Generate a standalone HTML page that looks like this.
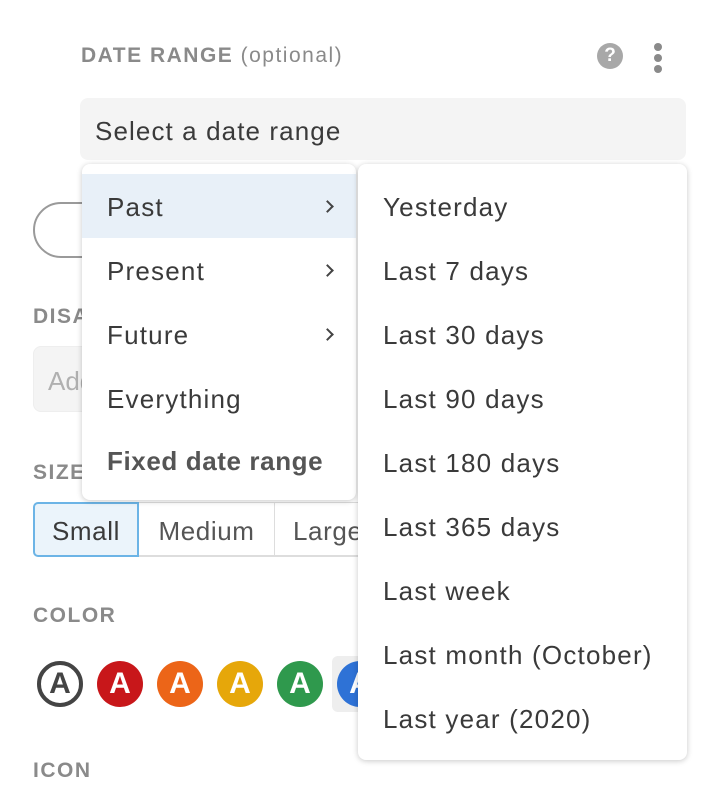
<!DOCTYPE html>
<html><head><meta charset="utf-8"><style>
*{box-sizing:border-box;margin:0;padding:0}
body{width:706px;height:786px;background:#fff;font-family:"Liberation Sans",sans-serif;position:relative;overflow:hidden;color:#3a3a3a}
.a{position:absolute}
.lbl{font-size:21px;font-weight:bold;color:#8a8a8a;letter-spacing:1.5px}
.item{position:absolute;left:0;right:0;height:64px;line-height:66px;font-size:26px;letter-spacing:1.2px;color:#3a3a3a}
.chev{position:absolute;right:24px;top:28px;width:9px;height:9px;border-right:2.5px solid #444;border-top:2.5px solid #444;transform:rotate(45deg)}
.circ{position:absolute;width:46px;height:46px;border-radius:50%;color:#fff;font-weight:bold;font-size:30px;text-align:center;line-height:46px;top:661px}
</style></head><body>
<div class="a lbl" style="left:81px;top:44px">DATE RANGE <span style="font-weight:normal">(optional)</span></div>
<div class="a" style="left:597px;top:43px;width:26px;height:26px;border-radius:50%;background:#a8a8a8;color:#fff;font-weight:bold;font-size:19px;text-align:center;line-height:26px">?</div>
<div class="a" style="left:654px;top:43px;width:8px;height:8px;border-radius:50%;background:#8a8a8a"></div>
<div class="a" style="left:654px;top:54px;width:8px;height:8px;border-radius:50%;background:#8a8a8a"></div>
<div class="a" style="left:654px;top:65px;width:8px;height:8px;border-radius:50%;background:#8a8a8a"></div>
<div class="a" style="left:80px;top:98px;width:606px;height:62px;background:#f4f4f4;border-radius:8px;font-size:26px;letter-spacing:1.1px;line-height:66px;padding-left:15px;color:#3a3a3a">Select a date range</div>

<div class="a" style="left:33px;top:202px;width:120px;height:56px;border:2px solid #9a9a9a;border-radius:28px"></div>
<div class="a lbl" style="left:33px;top:305px">DISABLED</div>
<div class="a" style="left:33px;top:346px;width:300px;height:66px;background:#f4f4f4;border:1px solid #eee;border-radius:8px;font-size:26px;line-height:68px;padding-left:14px;color:#b0b0b0">Add</div>
<div class="a lbl" style="left:33px;top:461px">SIZE</div>
<div class="a" style="left:33px;top:502px;width:106px;height:55px;background:#ebf4fb;border:2px solid #6cb4e6;border-radius:5px 0 0 5px;font-size:26px;letter-spacing:0.6px;line-height:54px;text-align:center">Small</div>
<div class="a" style="left:139px;top:502px;width:136px;height:55px;border:1px solid #ddd;border-width:1px 1px 2px 0;font-size:26px;letter-spacing:0.6px;line-height:56px;text-align:center;color:#555">Medium</div>
<div class="a" style="left:275px;top:502px;width:120px;height:55px;border:1px solid #ddd;border-width:1px 1px 2px 0;font-size:26px;letter-spacing:0.6px;line-height:56px;padding-left:18px;color:#555">Large</div>
<div class="a lbl" style="left:33px;top:604px">COLOR</div>
<div class="circ" style="left:37px;border:4px solid #444;color:#444;line-height:38px;background:#fff">A</div>
<div class="circ" style="left:97px;background:#c8171a">A</div>
<div class="circ" style="left:157px;background:#ec6518">A</div>
<div class="circ" style="left:217px;background:#e6a70a">A</div>
<div class="circ" style="left:277px;background:#2f994d">A</div>
<div class="a" style="left:332px;top:656px;width:40px;height:56px;background:#eee;border-radius:6px"></div>
<div class="circ" style="left:337px;background:#2e72d6">A</div>
<div class="a lbl" style="left:33px;top:759px">ICON</div>

<div class="a" style="left:82px;top:164px;width:274px;height:336px;background:#fff;border-radius:8px;box-shadow:0 1px 6px rgba(0,0,0,.22);overflow:hidden">
<div class="item" style="top:10px;background:#e8f0f8;padding-left:25px">Past<span class="chev"></span></div>
<div class="item" style="top:74px;padding-left:25px">Present<span class="chev"></span></div>
<div class="item" style="top:138px;padding-left:25px">Future<span class="chev"></span></div>
<div class="item" style="top:202px;padding-left:25px">Everything</div>
<div class="item" style="top:264px;padding-left:25px;font-weight:bold;letter-spacing:0.6px;color:#555">Fixed date range</div>
</div>
<div class="a" style="left:358px;top:164px;width:329px;height:596px;background:#fff;border-radius:8px;box-shadow:0 1px 6px rgba(0,0,0,.22)">
<div class="item" style="top:10px;padding-left:25px">Yesterday</div>
<div class="item" style="top:74px;padding-left:25px">Last 7 days</div>
<div class="item" style="top:138px;padding-left:25px">Last 30 days</div>
<div class="item" style="top:202px;padding-left:25px">Last 90 days</div>
<div class="item" style="top:266px;padding-left:25px">Last 180 days</div>
<div class="item" style="top:330px;padding-left:25px">Last 365 days</div>
<div class="item" style="top:394px;padding-left:25px">Last week</div>
<div class="item" style="top:458px;padding-left:25px">Last month (October)</div>
<div class="item" style="top:522px;padding-left:25px">Last year (2020)</div>
</div>
</body></html>
